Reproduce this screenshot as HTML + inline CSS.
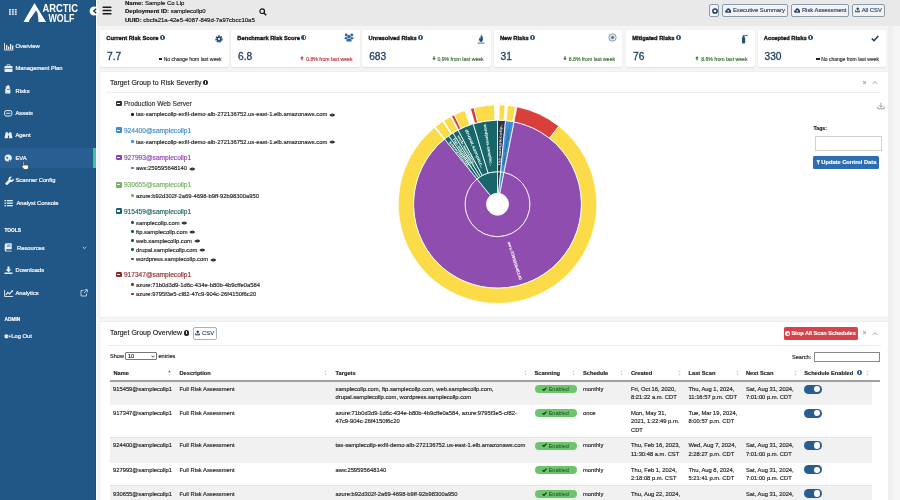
<!DOCTYPE html>
<html><head><meta charset="utf-8"><style>
*{box-sizing:border-box;margin:0;padding:0}
html,body{width:900px;height:500px;overflow:hidden;background:#f5f5f5;font-family:"Liberation Sans",sans-serif;color:#222}
#root{position:absolute;left:0;top:0;width:900px;height:500px;will-change:transform;-webkit-text-stroke-width:0.15px}
.a{position:absolute;white-space:nowrap}
#side{position:absolute;left:0;top:0;width:95.8px;border-right:1.3px solid #1b4b7a;height:500px;background:#215787}
#side .nv{position:absolute;color:#f4f7fb;font-size:5.8px;line-height:8px;height:8px;-webkit-text-stroke-width:0.22px}
#side .hd{position:absolute;left:4.5px;color:#fff;font-size:4.8px;font-weight:bold;line-height:6px}
#hdr{position:absolute;left:97.2px;top:0;width:803px;height:25.5px;background:#e9e9e9}
.card{position:absolute;top:29.5px;height:37px;width:128.5px;background:#fff;border-radius:2px;box-shadow:0 0.4px 1.2px rgba(0,0,0,.09)}
.card .t{position:absolute;left:6.3px;top:4px;font-size:5.75px;font-weight:bold;line-height:8px;color:#111;-webkit-text-stroke-width:0.3px}
.card .v{position:absolute;left:7px;top:20px;font-size:10.2px;line-height:13px;color:#1f4068;-webkit-text-stroke-width:0.3px}
.card .d{position:absolute;right:7px;top:26.3px;font-size:5px;line-height:6px;color:#333}
.info{display:inline-block;width:5px;height:5px;border-radius:50%;background:#2d5a88;vertical-align:-0.5px;margin-left:1.5px;position:relative}
.info:after{content:"";position:absolute;left:2.1px;top:2px;width:0.8px;height:2px;background:#fff}
.info:before{content:"";position:absolute;left:2.1px;top:0.9px;width:0.8px;height:0.7px;background:#fff}
.panel{position:absolute;left:100px;width:788px;background:#fff;box-shadow:0 0 0 0.6px #ebebeb}
.btn{position:absolute;background:#f1f3f6;border:0.8px solid #8c9bab;border-radius:2px;color:#1f3a5c;font-size:5.85px;line-height:11.5px;text-align:center}
.lg{position:absolute;font-size:6.6px;line-height:9px}
.sb{position:absolute;left:136px;font-size:5.85px;line-height:8px;color:#222}
.sb:before{content:"";position:absolute;left:-4.8px;top:2.5px;width:2.7px;height:2.7px;border-radius:50%;background:currentColor}
.th{position:absolute;top:368.6px;font-size:5.7px;font-weight:bold;line-height:8px;color:#222}
.td{position:absolute;font-size:5.8px;line-height:8.3px;color:#222;white-space:nowrap}
.badge{position:absolute;left:534.5px;width:42px;height:8px;border-radius:4px;background:#6cc56c;color:#1f3f1f;font-size:5.5px;-webkit-text-stroke-width:0;line-height:8px;text-align:center}
.tog{position:absolute;left:803.5px;width:18px;height:9px;border-radius:4.5px;background:#275d92}
.tog:after{content:"";position:absolute;right:1.2px;top:1.2px;width:6.6px;height:6.6px;border-radius:50%;background:#fff}
.srt{position:absolute;top:368.6px;font-size:5px;color:#bbb;line-height:8px}
</style></head><body><div id="root">
<div id="side">
<svg class="a" style="left:8.5px;top:9px" width="8" height="6" viewBox="0 0 8 6"><g fill="#e8eef5"><rect x="0" y="0" width="1.9" height="1.5"/><rect x="0" y="2.2" width="1.9" height="1.5"/><rect x="0" y="4.4" width="1.9" height="1.5"/><rect x="2.9" y="0" width="1.9" height="1.5"/><rect x="2.9" y="2.2" width="1.9" height="1.5"/><rect x="2.9" y="4.4" width="1.9" height="1.5"/><rect x="5.8" y="0" width="1.9" height="1.5"/><rect x="5.8" y="2.2" width="1.9" height="1.5"/><rect x="5.8" y="4.4" width="1.9" height="1.5"/></g></svg>
<svg class="a" style="left:22px;top:2px" width="60" height="22" viewBox="0 0 60 22">
<path d="M12.5 1 L24 20 L16.5 20 L16 14 L15.5 11 L14 8.5 L13 10 L12 11.5 L9.5 15 L7.5 17.5 L7 20 L1.5 20 Z" fill="#fff"/>
<text x="20.5" y="10.3" font-family="Liberation Sans" font-weight="bold" font-size="10" fill="#fff" textLength="35.5" lengthAdjust="spacingAndGlyphs">ARCTIC</text>
<text x="26.5" y="20" font-family="Liberation Sans" font-weight="bold" font-size="10" fill="#fff" textLength="26" lengthAdjust="spacingAndGlyphs">WOLF</text>
</svg>
<div class="a" style="left:0;top:148px;width:95px;height:20px;background:#285e92"></div>
<div class="a" style="left:93px;top:148px;width:2.5px;height:20px;background:#3cc4a0"></div>
<div class="nv" style="top:41.5px;left:15.5px">Overview</div>
<svg class="a" style="left:4px;top:41.5px" width="10" height="9" viewBox="0 0 10 9"><path d="M0.5 1v7h9" stroke="#e8eef5" stroke-width="0.9" fill="none"/><rect x="2" y="3" width="1.3" height="4.3" fill="#e8eef5"/><rect x="4" y="4.5" width="1.3" height="2.8" fill="#e8eef5"/><rect x="6" y="2" width="1.3" height="5.3" fill="#e8eef5"/><rect x="8" y="3.5" width="1.3" height="3.8" fill="#e8eef5"/></svg>
<div class="nv" style="top:64.0px;left:15.5px">Management Plan</div>
<svg class="a" style="left:4px;top:64.0px" width="10" height="9" viewBox="0 0 10 9"><rect x="0.5" y="2" width="8" height="6" rx="0.8" fill="#e8eef5"/><rect x="3" y="0.8" width="3" height="1.6" fill="none" stroke="#e8eef5" stroke-width="0.7"/><rect x="0.5" y="4.3" width="8" height="0.7" fill="#215787"/></svg>
<div class="nv" style="top:86.5px;left:15.5px">Risks</div>
<svg class="a" style="left:4px;top:85.3px" width="10" height="9" viewBox="0 0 10 9"><path d="M3.6 0.2h1.4v1h0.9v1.2l-0.5 0.6 1 1.2v4.3h-5.2v-4.3l1-1.2-0.5-0.6v-1.2h0.9z" fill="#e8eef5"/><rect x="3.1" y="4.2" width="2.4" height="0.8" fill="#215787"/></svg>
<div class="nv" style="top:108.8px;left:15.5px">Assets</div>
<svg class="a" style="left:4px;top:108.8px" width="10" height="9" viewBox="0 0 10 9"><rect x="0.6" y="1.6" width="7.2" height="5.4" rx="1.6" fill="none" stroke="#e8eef5" stroke-width="1"/><path d="M2.2 4.3h4" stroke="#e8eef5" stroke-width="1"/></svg>
<div class="nv" style="top:131.2px;left:15.5px">Agent</div>
<svg class="a" style="left:4px;top:131.2px" width="10" height="9" viewBox="0 0 10 9"><path d="M0.5 7.3l1.2-6h2.2v6zM5.1 7.3v-6h2.2l1.2 6z" fill="#e8eef5"/><rect x="3" y="2.5" width="3" height="2" fill="#e8eef5"/></svg>
<div class="nv" style="top:153.8px;left:15.5px">EVA</div>
<svg class="a" style="left:4px;top:153.8px" width="10" height="9" viewBox="0 0 10 9"><circle cx="4.2" cy="4" r="3.6" fill="#e8eef5"/><path d="M2 2.5q1.5 0.3 2.3 1.5q-0.5 1-1 1q-1-0.5-1.3-2.5z M5 5.5q1 0 1.8 1q-1 0.8-2.2 0.7z" fill="#285e92"/></svg>
<div class="nv" style="top:176.2px;left:15.5px">Scanner Config</div>
<svg class="a" style="left:4px;top:176.2px" width="10" height="9" viewBox="0 0 10 9"><path d="M1 7.5l3.5-3.5q-0.5-2 1-3t2.5-0.2l-1.6 1.6 0.3 1.3 1.3 0.3 1.6-1.6q0.5 1.3-0.3 2.5t-3 1l-3.5 3.5z" fill="#e8eef5"/></svg>
<div class="nv" style="top:198.7px;left:16.5px">Analyst Console</div>
<svg class="a" style="left:4px;top:198.7px" width="10" height="9" viewBox="0 0 10 9"><g fill="#e8eef5"><rect x="0.5" y="1" width="1.5" height="1.3"/><rect x="2.8" y="1" width="6" height="1.3"/><rect x="0.5" y="3.5" width="1.5" height="1.3"/><rect x="2.8" y="3.5" width="6" height="1.3"/><rect x="0.5" y="6" width="1.5" height="1.3"/><rect x="2.8" y="6" width="6" height="1.3"/></g></svg>
<div class="nv" style="top:243.5px;left:17px">Resources</div>
<svg class="a" style="left:4px;top:242.9px" width="10" height="9" viewBox="0 0 10 9"><path d="M2.3 0.3h5.4v6h-5.1q-0.7 0-0.7 0.7t0.7 0.7h5.1v0.8h-5.4q-1.6 0-1.6-1.5v-5.2q0-1.5 1.6-1.5z" fill="#e8eef5"/><path d="M3 2h3.5M3 3.3h3.5" stroke="#215787" stroke-width="0.6"/></svg>
<div class="nv" style="top:266.0px;left:15.5px">Downloads</div>
<svg class="a" style="left:4px;top:266.0px" width="10" height="9" viewBox="0 0 10 9"><path d="M3.5 0.5h2v3h1.8l-2.8 2.8-2.8-2.8h1.8z" fill="#e8eef5"/><rect x="0.5" y="6.5" width="8" height="1.5" fill="#e8eef5"/></svg>
<div class="nv" style="top:288.5px;left:15.5px">Analytics</div>
<svg class="a" style="left:4px;top:288.5px" width="10" height="9" viewBox="0 0 10 9"><path d="M0.6 1v6.5h8.5" stroke="#e8eef5" stroke-width="0.9" fill="none"/><path d="M1.8 6l2-2.6 1.8 1.5 2.9-3.2" stroke="#e8eef5" stroke-width="1.1" fill="none"/><path d="M7.2 1.3h1.8v1.8z" fill="#e8eef5"/></svg>
<div class="nv" style="top:332.3px;left:11.3px">Log Out</div>
<svg class="a" style="left:4px;top:331.8px" width="10" height="9" viewBox="0 0 10 9"><rect x="0.6" y="2.4" width="3.6" height="3.8" rx="0.8" fill="#e8eef5"/><path d="M3.5 4.3H5.6" stroke="#215787" stroke-width="0.7"/><path d="M4.6 4.3H6" stroke="#e8eef5" stroke-width="1"/><path d="M5.5 2.9L7.1 4.3 5.5 5.7Z" fill="#e8eef5"/></svg>
<div class="hd" style="top:228px">TOOLS</div><div class="hd" style="top:317.3px">ADMIN</div>
<svg class="a" style="left:82px;top:246px" width="5" height="4" viewBox="0 0 5 4"><path d="M0.8 1l1.7 1.6 1.7-1.6" stroke="#dfe7f0" stroke-width="0.8" fill="none"/></svg>
<svg class="a" style="left:79.5px;top:288.5px" width="8" height="8" viewBox="0 0 8 8"><path d="M3.5 1.5h-2.5v5.5h5.5v-2.5" stroke="#dfe7f0" stroke-width="0.8" fill="none"/><path d="M4 4l3.3-3.3M4.5 0.7h2.8v2.8" stroke="#dfe7f0" stroke-width="0.8" fill="none"/></svg>
<svg class="a" style="left:21px;top:160.5px" width="9" height="9" viewBox="0 0 9 9"><path d="M2 0.8q0.8-0.5 1.2 0.3v3q0.8-0.6 1.5 0q0.8-0.5 1.5 0.1q0.8-0.4 1.4 0.3v2.5q-0.5 1.5-2 1.5h-1.8q-1 0-1.8-1.2l-1.6-2.3q-0.2-0.8 0.7-0.8l0.9 0.8v-4.2z" fill="#fff" stroke="#222" stroke-width="0.6"/></svg>
</div>
<div id="hdr"></div>
<div class="a" style="left:95.8px;top:0;width:1.4px;height:500px;background:#fff"></div>
<svg class="a" style="left:88.2px;top:4.5px" width="12" height="12" viewBox="0 0 12 12"><circle cx="6.2" cy="6" r="4.6" fill="#fff"/><path d="M8.2 3.7L5.8 6 8.2 8.3" stroke="#1d2d3d" stroke-width="1.3" fill="none"/></svg>
<svg class="a" style="left:101.5px;top:6px" width="10" height="9" viewBox="0 0 10 9"><g fill="#1a1a1a"><rect x="0.5" y="0.5" width="9" height="1.5" rx="0.6"/><rect x="0.5" y="3.8" width="9" height="1.5" rx="0.6"/><rect x="0.5" y="7" width="9" height="1.5" rx="0.6"/></g></svg>
<div class="a" style="left:125px;top:-0.4px;font-size:6px;line-height:6px;color:#111"><b>Name:</b> Sample Co Llp</div>
<div class="a" style="left:125px;top:8.1px;font-size:6px;line-height:6px;color:#111"><b>Deployment ID:</b> samplecollp0</div>
<div class="a" style="left:125px;top:16.8px;font-size:6px;line-height:6px;color:#111"><b>UUID:</b> cbcfa21a-42e5-4087-849d-7a97cbcc10a5</div>
<svg class="a" style="left:258.5px;top:7.5px" width="8" height="8" viewBox="0 0 8 8"><circle cx="3.2" cy="3.2" r="2.3" stroke="#111" stroke-width="1.2" fill="none"/><path d="M4.9 4.9l2.3 2.3" stroke="#111" stroke-width="1.4"/></svg>
<div class="btn" style="left:708.5px;top:4px;width:10.5px;height:13px"><svg style="position:absolute;left:2.3px;top:3.3px" width="6" height="6" viewBox="0 0 6 6"><circle cx="3" cy="3" r="2.1" fill="none" stroke="#1f3a5c" stroke-width="1.5"/></svg></div>
<div class="btn" style="left:722px;top:4px;width:65.5px;height:13px"><svg style="display:inline-block;margin-right:1.8px;vertical-align:-0.8px" width="6.5" height="5" viewBox="0 0 6.5 5"><path d="M1.5 4.8Q0.1 4.8 0.1 3.5Q0.1 2.3 1.3 2.2Q1.6 0.3 3.4 0.3Q5 0.3 5.3 2Q6.4 2.2 6.4 3.4Q6.4 4.8 5 4.8Z" fill="#1f3a5c"/><path d="M3.25 4.3V2.5M2.3 3.2L3.25 2.1 4.2 3.2" stroke="#fff" stroke-width="0.7" fill="none"/></svg>Executive Summary</div>
<div class="btn" style="left:791px;top:4px;width:58px;height:13px"><svg style="display:inline-block;margin-right:1.8px;vertical-align:-0.8px" width="6.5" height="5" viewBox="0 0 6.5 5"><path d="M1.5 4.8Q0.1 4.8 0.1 3.5Q0.1 2.3 1.3 2.2Q1.6 0.3 3.4 0.3Q5 0.3 5.3 2Q6.4 2.2 6.4 3.4Q6.4 4.8 5 4.8Z" fill="#1f3a5c"/><path d="M3.25 4.3V2.5M2.3 3.2L3.25 2.1 4.2 3.2" stroke="#fff" stroke-width="0.7" fill="none"/></svg>Risk Assessment</div>
<div class="btn" style="left:852px;top:4px;width:32.5px;height:13px"><svg style="display:inline-block;margin-right:1.6px;vertical-align:-0.5px" width="5.5" height="5.5" viewBox="0 0 5.5 5.5"><path d="M2.75 0.2L4.6 2.3H3.4V3.6H2.1V2.3H0.9Z" fill="#1f3a5c"/><path d="M0.2 3.3V5.2H5.3V3.3H4.5V4.3H1V3.3Z" fill="#1f3a5c"/></svg>All CSV</div>
<div class="card" style="left:100px"><div class="t">Current Risk Score<span class="info"></span></div><div class="v">7.7</div><div class="d" style="color:#333;font-size:5px"><span style="display:inline-block;width:3.6px;height:1.2px;background:#222;margin-right:1.3px;vertical-align:1.2px"></span>No change from last week</div><svg class="a" style="right:6px;top:5px" width="8" height="8" viewBox="0 0 8 8"><circle cx="4" cy="4" r="2.4" fill="none" stroke="#23507f" stroke-width="2.6" stroke-dasharray="1.3 0.6"/><circle cx="4" cy="4" r="2.5" fill="#23507f"/><circle cx="4" cy="4" r="1" fill="#fff"/></svg></div>
<div class="card" style="left:231px"><div class="t">Benchmark Risk Score<span class="info"></span></div><div class="v">6.8</div><div class="d" style="color:#c0303a;font-size:5.15px"><svg style="display:inline-block;margin-right:1.8px;vertical-align:-0.2px" width="4" height="4.6" viewBox="0 0 4 4.6"><path d="M2 0.3L3.8 2.3H2.6V4.3H1.4V2.3H0.2Z" fill="#c0303a"/></svg>0.8% from last week</div><svg class="a" style="right:6px;top:3.5px" width="10" height="9" viewBox="0 0 10 9"><g fill="#2d6aa8"><circle cx="2.2" cy="2" r="1.4"/><circle cx="7.8" cy="2" r="1.4"/><circle cx="5" cy="3.5" r="1.7"/><path d="M0.3 6q0-2 2-2 1 0 1.5 0.6 -0.5 1-0.5 2z"/><path d="M9.7 6q0-2-2-2-1 0-1.5 0.6 0.5 1 0.5 2z"/><path d="M2.3 8.5q0-3 2.7-3t2.7 3z"/></g></svg></div>
<div class="card" style="left:362.2px"><div class="t">Unresolved Risks<span class="info"></span></div><div class="v">683</div><div class="d" style="color:#3d6b35;font-size:5.15px"><svg style="display:inline-block;margin-right:1.8px;vertical-align:-0.2px" width="4" height="4.6" viewBox="0 0 4 4.6"><path d="M2 4.3L3.8 2.3H2.6V0.3H1.4V2.3H0.2Z" fill="#3d6b35"/></svg>0.9% from last week</div><svg class="a" style="right:6px;top:4px" width="8" height="10" viewBox="0 0 8 10"><path d="M4 0.5q2.5 2.5 2 5t-2 2.5-2-2.5q0-1.5 1.2-2.5q-0.3 1.5 0.6 1.8q-0.5-2.2 0.2-4.3z" fill="#23507f"/><rect x="0.5" y="8.7" width="7" height="0.8" fill="#23507f"/></svg></div>
<div class="card" style="left:493.6px"><div class="t">New Risks<span class="info"></span></div><div class="v">31</div><div class="d" style="color:#3d6b35;font-size:5.15px"><svg style="display:inline-block;margin-right:1.8px;vertical-align:-0.2px" width="4" height="4.6" viewBox="0 0 4 4.6"><path d="M2 4.3L3.8 2.3H2.6V0.3H1.4V2.3H0.2Z" fill="#3d6b35"/></svg>8.8% from last week</div><svg class="a" style="right:5.5px;top:3.5px" width="9" height="9" viewBox="0 0 9 9"><circle cx="4.5" cy="4.5" r="3.7" fill="#d8e0ea" stroke="#7d8fa5" stroke-width="0.8"/><circle cx="4.5" cy="4.5" r="1.3" fill="#3d5a7c"/></svg></div>
<div class="card" style="left:626px"><div class="t">Mitigated Risks<span class="info"></span></div><div class="v">76</div><div class="d" style="color:#3d6b35;font-size:5.15px"><svg style="display:inline-block;margin-right:1.8px;vertical-align:-0.2px" width="4" height="4.6" viewBox="0 0 4 4.6"><path d="M2 0.3L3.8 2.3H2.6V4.3H1.4V2.3H0.2Z" fill="#3d6b35"/></svg>8.6% from last week</div><svg class="a" style="right:5.5px;top:4px" width="9" height="10" viewBox="0 0 9 10"><rect x="2" y="3" width="3.2" height="6.5" rx="1" fill="#23507f"/><rect x="2.7" y="1.2" width="1.8" height="2" fill="#23507f"/><path d="M4.5 1.5h2.5M7 0.8v1.6" stroke="#23507f" stroke-width="0.8"/></svg></div>
<div class="card" style="left:757.5px"><div class="t">Accepted Risks<span class="info"></span></div><div class="v">330</div><div class="d" style="color:#333;font-size:5px"><span style="display:inline-block;width:3.6px;height:1.2px;background:#222;margin-right:1.3px;vertical-align:1.2px"></span>No change from last week</div><svg class="a" style="right:7px;top:5px" width="8" height="7" viewBox="0 0 8 7"><path d="M0.8 3.5l2.2 2.2 4.3-4.6" stroke="#1e3550" stroke-width="1.5" fill="none"/></svg></div>
<div class="panel" style="top:71.5px;height:245.5px"></div>
<div class="a" style="left:110px;top:77.5px;font-size:7px;line-height:10px;color:#222">Target Group to Risk Severity<span class="info" style="background:#222;width:5.2px;height:5.2px;margin-left:1.8px"></span></div>
<div class="a" style="left:106px;top:91.5px;width:774px;height:0.8px;background:#ececec"></div>
<div class="a" style="left:862.5px;top:78.5px;font-size:6.8px;line-height:8px;color:#999">&#215;</div>
<svg class="a" style="left:871.5px;top:80px" width="6" height="5" viewBox="0 0 6 5"><path d="M0.8 3.8l2.2-2.2 2.2 2.2" stroke="#999" stroke-width="1" fill="none"/></svg>
<svg class="a" style="left:876.5px;top:102px" width="8" height="8" viewBox="0 0 8 8"><path d="M4 0.8v4.3M2.2 3.5l1.8 1.8 1.8-1.8M0.8 4.5v2.3h6.4v-2.3" stroke="#888" stroke-width="0.8" fill="none"/></svg>
<div class="a" style="left:813.5px;top:125px;font-size:5.2px;font-weight:bold;line-height:7px;color:#222">Tags:</div>
<div class="a" style="left:815px;top:135.5px;width:66.5px;height:15.5px;border:0.8px solid #d2d2d2;background:#fff"></div>
<div class="a" style="left:813px;top:156px;width:66px;height:13px;background:#2f6db3;border-radius:1.5px;color:#fff;font-size:5.7px;font-weight:bold;line-height:13px;text-align:center"><svg style="display:inline-block;margin-right:1.2px;vertical-align:-0.6px" width="4.5" height="5" viewBox="0 0 4.5 5"><path d="M0.2 0.3H4.3L2.8 2.2V4.7L1.7 4V2.2Z" fill="#fff"/></svg>Update Control Data</div>
<div class="lg" style="left:116px;top:98.9px;color:#333"><span style="display:inline-block;width:5.6px;height:5.6px;border-radius:1.2px;background:#333;margin-right:2.3px;vertical-align:-0.3px;position:relative"><i style="position:absolute;left:1.1px;top:2.2px;width:3.4px;height:1.2px;background:#fff"></i></span>Production Web Server</div>
<div class="sb" style="top:110.4px;color:#111"><span style="color:#222">tas-samplecollp-exfil-demo-alb-272136752.us-east-1.elb.amazonaws.com</span><svg style="display:inline-block;margin-left:1.8px;vertical-align:-0.6px" width="6.5" height="4" viewBox="0 0 6.5 4"><path d="M0.3 2Q3.25-1 6.2 2Q3.25 5 0.3 2Z" fill="#222"/><circle cx="3.25" cy="2" r="0.8" fill="#666"/></svg></div>
<div class="lg" style="left:116px;top:125.7px;color:#3b8ccc"><span style="display:inline-block;width:5.6px;height:5.6px;border-radius:1.2px;background:#3b8ccc;margin-right:2.3px;vertical-align:-0.3px;position:relative"><i style="position:absolute;left:1.1px;top:2.2px;width:3.4px;height:1.2px;background:#fff"></i></span>924400@samplecollp1</div>
<div class="sb" style="top:137.7px;color:#3b8ccc"><span style="color:#222">tas-samplecollp-exfil-demo-alb-272136752.us-east-1.elb.amazonaws.com</span><svg style="display:inline-block;margin-left:1.8px;vertical-align:-0.6px" width="6.5" height="4" viewBox="0 0 6.5 4"><path d="M0.3 2Q3.25-1 6.2 2Q3.25 5 0.3 2Z" fill="#222"/><circle cx="3.25" cy="2" r="0.8" fill="#666"/></svg></div>
<div class="lg" style="left:116px;top:152.8px;color:#8e44ad"><span style="display:inline-block;width:5.6px;height:5.6px;border-radius:1.2px;background:#8e44ad;margin-right:2.3px;vertical-align:-0.3px;position:relative"><i style="position:absolute;left:1.1px;top:2.2px;width:3.4px;height:1.2px;background:#fff"></i></span>927993@samplecollp1</div>
<div class="sb" style="top:164.3px;color:#8e44ad"><span style="color:#222">aws:259595648140</span><svg style="display:inline-block;margin-left:1.8px;vertical-align:-0.6px" width="6.5" height="4" viewBox="0 0 6.5 4"><path d="M0.3 2Q3.25-1 6.2 2Q3.25 5 0.3 2Z" fill="#222"/><circle cx="3.25" cy="2" r="0.8" fill="#666"/></svg></div>
<div class="lg" style="left:116px;top:180.4px;color:#76b062"><span style="display:inline-block;width:5.6px;height:5.6px;border-radius:1.2px;background:#76b062;margin-right:2.3px;vertical-align:-0.3px;position:relative"><i style="position:absolute;left:1.1px;top:2.2px;width:3.4px;height:1.2px;background:#fff"></i></span>930655@samplecollp1</div>
<div class="sb" style="top:191.7px;color:#76b062"><span style="color:#222">azure:b92d302f-2a69-4698-b9ff-92b98300a950</span></div>
<div class="lg" style="left:116px;top:206.5px;color:#1a6468"><span style="display:inline-block;width:5.6px;height:5.6px;border-radius:1.2px;background:#1a6468;margin-right:2.3px;vertical-align:-0.3px;position:relative"><i style="position:absolute;left:1.1px;top:2.2px;width:3.4px;height:1.2px;background:#fff"></i></span>915459@samplecollp1</div>
<div class="sb" style="top:218.7px;color:#1a5a5e"><span style="color:#222">samplecollp.com</span><svg style="display:inline-block;margin-left:1.8px;vertical-align:-0.6px" width="6.5" height="4" viewBox="0 0 6.5 4"><path d="M0.3 2Q3.25-1 6.2 2Q3.25 5 0.3 2Z" fill="#222"/><circle cx="3.25" cy="2" r="0.8" fill="#666"/></svg></div>
<div class="sb" style="top:227.9px;color:#1a5a5e"><span style="color:#222">ftp.samplecollp.com</span><svg style="display:inline-block;margin-left:1.8px;vertical-align:-0.6px" width="6.5" height="4" viewBox="0 0 6.5 4"><path d="M0.3 2Q3.25-1 6.2 2Q3.25 5 0.3 2Z" fill="#222"/><circle cx="3.25" cy="2" r="0.8" fill="#666"/></svg></div>
<div class="sb" style="top:236.8px;color:#1a5a5e"><span style="color:#222">web.samplecollp.com</span><svg style="display:inline-block;margin-left:1.8px;vertical-align:-0.6px" width="6.5" height="4" viewBox="0 0 6.5 4"><path d="M0.3 2Q3.25-1 6.2 2Q3.25 5 0.3 2Z" fill="#222"/><circle cx="3.25" cy="2" r="0.8" fill="#666"/></svg></div>
<div class="sb" style="top:245.9px;color:#1a5a5e"><span style="color:#222">drupal.samplecollp.com</span><svg style="display:inline-block;margin-left:1.8px;vertical-align:-0.6px" width="6.5" height="4" viewBox="0 0 6.5 4"><path d="M0.3 2Q3.25-1 6.2 2Q3.25 5 0.3 2Z" fill="#222"/><circle cx="3.25" cy="2" r="0.8" fill="#666"/></svg></div>
<div class="sb" style="top:255.0px;color:#1a5a5e"><span style="color:#222">wordpress.samplecollp.com</span><svg style="display:inline-block;margin-left:1.8px;vertical-align:-0.6px" width="6.5" height="4" viewBox="0 0 6.5 4"><path d="M0.3 2Q3.25-1 6.2 2Q3.25 5 0.3 2Z" fill="#222"/><circle cx="3.25" cy="2" r="0.8" fill="#666"/></svg></div>
<div class="lg" style="left:116px;top:269.9px;color:#8b2b2b"><span style="display:inline-block;width:5.6px;height:5.6px;border-radius:1.2px;background:#8b2b2b;margin-right:2.3px;vertical-align:-0.3px;position:relative"><i style="position:absolute;left:1.1px;top:2.2px;width:3.4px;height:1.2px;background:#fff"></i></span>917347@samplecollp1</div>
<div class="sb" style="top:280.8px;color:#8b2b2b"><span style="color:#222">azure:71b0d3d9-1d6c-434e-b80b-4b9cffe0a584</span></div>
<div class="sb" style="top:290.0px;color:#8b2b2b"><span style="color:#222">azure:9795f3e5-cf82-47c9-904c-26f4150f6c20</span></div>
<svg class="a" style="left:390px;top:95px" width="220" height="220" viewBox="0 0 220 220"><path d="M113.87 77.33A32.5 32.5 0 1 1 87.00 83.98L100.56 100.66A11 11 0 1 0 109.66 98.41Z" fill="#8f4db0" stroke="#fff" stroke-width="0.8"/><path d="M87.00 83.98A32.5 32.5 0 0 1 107.50 76.70L107.50 98.20A11 11 0 0 0 100.56 100.66Z" fill="#17676a" stroke="#fff" stroke-width="0.8"/><path d="M107.50 76.70A32.5 32.5 0 0 1 110.61 76.85L108.55 98.25A11 11 0 0 0 107.50 98.20Z" fill="#2b3445" stroke="#fff" stroke-width="0.8"/><path d="M110.61 76.85A32.5 32.5 0 0 1 113.87 77.33L109.66 98.41A11 11 0 0 0 108.55 98.25Z" fill="#3d8fd6" stroke="#fff" stroke-width="0.8"/><path d="M123.96 26.83A84 84 0 1 1 54.52 44.01L87.00 83.98A32.5 32.5 0 1 0 113.87 77.33Z" fill="#8f4db0" stroke="#fff" stroke-width="0.8"/><path d="M54.52 44.01A84 84 0 0 1 58.72 40.81L88.63 82.74A32.5 32.5 0 0 0 87.00 83.98Z" fill="#17676a" stroke="#fff" stroke-width="0.8"/><path d="M58.72 40.81A84 84 0 0 1 62.99 37.96L90.28 81.64A32.5 32.5 0 0 0 88.63 82.74Z" fill="#17676a" stroke="#fff" stroke-width="0.8"/><path d="M62.99 37.96A84 84 0 0 1 68.06 35.03L92.24 80.50A32.5 32.5 0 0 0 90.28 81.64Z" fill="#17676a" stroke="#fff" stroke-width="0.8"/><path d="M68.06 35.03A84 84 0 0 1 83.22 28.79L98.11 78.09A32.5 32.5 0 0 0 92.24 80.50Z" fill="#17676a" stroke="#fff" stroke-width="0.8"/><path d="M83.22 28.79A84 84 0 0 1 107.50 25.20L107.50 76.70A32.5 32.5 0 0 0 98.11 78.09Z" fill="#17676a" stroke="#fff" stroke-width="0.8"/><path d="M107.50 25.20A84 84 0 0 1 115.55 25.59L110.61 76.85A32.5 32.5 0 0 0 107.50 76.70Z" fill="#2b3445" stroke="#fff" stroke-width="0.8"/><path d="M115.55 25.59A84 84 0 0 1 123.96 26.83L113.87 77.33A32.5 32.5 0 0 0 110.61 76.85Z" fill="#3d8fd6" stroke="#fff" stroke-width="0.8"/><path d="M126.96 11.82A99.3 99.3 0 0 1 168.91 31.16L159.45 43.19A84 84 0 0 0 123.96 26.83Z" fill="#d9403c" stroke="#fff" stroke-width="0.8"/><path d="M168.91 31.16A99.3 99.3 0 1 1 44.34 32.58L54.07 44.38A84 84 0 1 0 159.45 43.19Z" fill="#fbdc48" stroke="#fff" stroke-width="0.8"/><path d="M45.28 31.81A99.3 99.3 0 0 1 52.69 26.40L61.14 39.15A84 84 0 0 0 54.87 43.74Z" fill="#fbdc48" stroke="#fff" stroke-width="0.8"/><path d="M53.71 25.73A99.3 99.3 0 0 1 60.42 21.77L67.68 35.24A84 84 0 0 0 62.00 38.59Z" fill="#fbdc48" stroke="#fff" stroke-width="0.8"/><path d="M61.49 21.20A99.3 99.3 0 0 1 64.28 19.80L70.94 33.57A84 84 0 0 0 68.58 34.76Z" fill="#d9403c" stroke="#fff" stroke-width="0.8"/><path d="M64.28 19.80A99.3 99.3 0 0 1 74.68 15.48L79.74 29.92A84 84 0 0 0 70.94 33.57Z" fill="#fbdc48" stroke="#fff" stroke-width="0.8"/><path d="M80.46 13.65A99.3 99.3 0 0 1 84.15 12.68L87.75 27.56A84 84 0 0 0 84.63 28.37Z" fill="#d9403c" stroke="#fff" stroke-width="0.8"/><path d="M84.15 12.68A99.3 99.3 0 0 1 104.38 9.95L104.86 25.24A84 84 0 0 0 87.75 27.56Z" fill="#fbdc48" stroke="#fff" stroke-width="0.8"/><path d="M109.23 9.92A99.3 99.3 0 0 1 115.12 10.19L113.94 25.45A84 84 0 0 0 108.97 25.21Z" fill="#fbdc48" stroke="#fff" stroke-width="0.8"/><path d="M117.71 10.43A99.3 99.3 0 0 1 125.43 11.53L122.66 26.58A84 84 0 0 0 116.13 25.64Z" fill="#fbdc48" stroke="#fff" stroke-width="0.8"/><text x="124.75" y="165.62" transform="rotate(73.0 124.75 165.62)" font-family="Liberation Sans" font-weight="bold" font-size="4.3" fill="#fff" text-anchor="middle" dominant-baseline="central" textLength="40" lengthAdjust="spacingAndGlyphs">aws:259595648140</text><text x="98.32" y="49.91" transform="rotate(81.2 98.32 49.91)" font-family="Liberation Sans" font-weight="bold" font-size="4.2" fill="#fff" text-anchor="middle" dominant-baseline="central" textLength="42" lengthAdjust="spacingAndGlyphs">wordpress.samplec..</text><text x="84.54" y="53.77" transform="rotate(67.5 84.54 53.77)" font-family="Liberation Sans" font-weight="bold" font-size="4.2" fill="#fff" text-anchor="middle" dominant-baseline="central" textLength="42" lengthAdjust="spacingAndGlyphs">drupal.samplec..</text><text x="76.50" y="55.51" transform="rotate(60.0 76.50 55.51)" font-family="Liberation Sans" font-weight="bold" font-size="3.4" fill="#fff" text-anchor="middle" dominant-baseline="central" textLength="34" lengthAdjust="spacingAndGlyphs">web.samplec..</text><text x="73.01" y="57.68" transform="rotate(56.2 73.01 57.68)" font-family="Liberation Sans" font-weight="bold" font-size="3.4" fill="#fff" text-anchor="middle" dominant-baseline="central" textLength="34" lengthAdjust="spacingAndGlyphs">ftp.samplec..</text><text x="69.93" y="59.88" transform="rotate(52.7 69.93 59.88)" font-family="Liberation Sans" font-weight="bold" font-size="3.4" fill="#fff" text-anchor="middle" dominant-baseline="central" textLength="34" lengthAdjust="spacingAndGlyphs">samplecol..</text><text x="110.33" y="49.27" transform="rotate(-87.3 110.33 49.27)" font-family="Liberation Sans" font-weight="bold" font-size="3.6" fill="#d8dde5" text-anchor="middle" dominant-baseline="central" textLength="42" lengthAdjust="spacingAndGlyphs">tas-samplecollp..</text><text x="116.26" y="49.84" transform="rotate(-81.6 116.26 49.84)" font-family="Liberation Sans" font-weight="bold" font-size="3.2" fill="#2a5a8a" text-anchor="middle" dominant-baseline="central" textLength="40" lengthAdjust="spacingAndGlyphs">tas-sample..</text></svg>
<div class="panel" style="top:321.5px;height:180px"></div>
<div class="a" style="left:110px;top:328px;font-size:7px;line-height:10px;color:#222">Target Group Overview<span class="info" style="background:#222;width:5.2px;height:5.2px;margin-left:1.8px"></span></div>
<div class="btn" style="left:192.5px;top:327.2px;width:24px;height:13px;background:#fff;border-color:#a9b3bf"><svg style="display:inline-block;margin-right:1.6px;vertical-align:-0.5px" width="5.5" height="5.5" viewBox="0 0 5.5 5.5"><path d="M2.75 0.2L4.6 2.3H3.4V3.6H2.1V2.3H0.9Z" fill="#1f3a5c"/><path d="M0.2 3.3V5.2H5.3V3.3H4.5V4.3H1V3.3Z" fill="#1f3a5c"/></svg>CSV</div>
<div class="a" style="left:783.5px;top:327.3px;width:74px;height:12.8px;background:#d8434b;border-radius:1.5px;color:#fff;font-size:5.5px;font-weight:bold;line-height:12.8px;text-align:center"><span style="display:inline-block;width:4.6px;height:4.6px;border-radius:50%;background:#fff;margin-right:1.6px;vertical-align:-0.6px;position:relative"><i style="position:absolute;left:1.3px;top:1.3px;width:2px;height:2px;border-radius:50%;background:#d8434b"></i></span>Stop All Scan Schedules</div>
<div class="a" style="left:862.5px;top:329px;font-size:6.8px;line-height:8px;color:#999">&#215;</div>
<svg class="a" style="left:871.5px;top:330.5px" width="6" height="5" viewBox="0 0 6 5"><path d="M0.8 3.8l2.2-2.2 2.2 2.2" stroke="#999" stroke-width="1" fill="none"/></svg>
<div class="a" style="left:106.5px;top:345.2px;width:774px;height:0.8px;background:#ececec"></div>
<div class="a" style="left:110px;top:352px;font-size:5.6px;line-height:8px;color:#222">Show</div>
<div class="a" style="left:125px;top:352px;width:32px;height:8px;border:0.7px solid #777;border-radius:1px;background:#fff;font-size:5.6px;line-height:6.8px;padding-left:2px;color:#222">10<svg style="position:absolute;right:1.5px;top:2.2px" width="4" height="3" viewBox="0 0 4 3"><path d="M0.5 0.7l1.5 1.5 1.5-1.5" stroke="#222" stroke-width="0.8" fill="none"/></svg></div>
<div class="a" style="left:158.5px;top:352px;font-size:5.6px;line-height:8px;color:#222">entries</div>
<div class="a" style="left:792px;top:353px;font-size:5.6px;line-height:8px;color:#222">Search:</div>
<div class="a" style="left:814px;top:351.8px;width:65.5px;height:10.5px;border:0.8px solid #888;background:#fff"></div>
<div class="th" style="left:113.5px">Name</div>
<div class="th" style="left:179.5px">Description</div>
<div class="th" style="left:335.5px">Targets</div>
<div class="th" style="left:534.5px">Scanning</div>
<div class="th" style="left:583px">Schedule</div>
<div class="th" style="left:631px">Created</div>
<div class="th" style="left:688.5px">Last Scan</div>
<div class="th" style="left:746px">Next Scan</div>
<div class="th" style="left:804.2px">Schedule Enabled</div>
<span class="info" style="position:absolute;left:855px;top:370.3px;background:#2d5a88"></span>
<svg class="a" style="left:324.0px;top:370px" width="3" height="6" viewBox="0 0 3 6"><path d="M1.5 0.3L2.7 2.2H0.3Z M1.5 5.7L2.7 3.8H0.3Z" fill="#cfcfcf"/></svg>
<svg class="a" style="left:523.5px;top:370px" width="3" height="6" viewBox="0 0 3 6"><path d="M1.5 0.3L2.7 2.2H0.3Z M1.5 5.7L2.7 3.8H0.3Z" fill="#cfcfcf"/></svg>
<svg class="a" style="left:572.1px;top:370px" width="3" height="6" viewBox="0 0 3 6"><path d="M1.5 0.3L2.7 2.2H0.3Z M1.5 5.7L2.7 3.8H0.3Z" fill="#cfcfcf"/></svg>
<svg class="a" style="left:619.5px;top:370px" width="3" height="6" viewBox="0 0 3 6"><path d="M1.5 0.3L2.7 2.2H0.3Z M1.5 5.7L2.7 3.8H0.3Z" fill="#cfcfcf"/></svg>
<svg class="a" style="left:677.5px;top:370px" width="3" height="6" viewBox="0 0 3 6"><path d="M1.5 0.3L2.7 2.2H0.3Z M1.5 5.7L2.7 3.8H0.3Z" fill="#cfcfcf"/></svg>
<svg class="a" style="left:735.5px;top:370px" width="3" height="6" viewBox="0 0 3 6"><path d="M1.5 0.3L2.7 2.2H0.3Z M1.5 5.7L2.7 3.8H0.3Z" fill="#cfcfcf"/></svg>
<svg class="a" style="left:793.5px;top:370px" width="3" height="6" viewBox="0 0 3 6"><path d="M1.5 0.3L2.7 2.2H0.3Z M1.5 5.7L2.7 3.8H0.3Z" fill="#cfcfcf"/></svg>
<svg class="a" style="left:865.5px;top:370px" width="3" height="6" viewBox="0 0 3 6"><path d="M1.5 0.3L2.7 2.2H0.3Z M1.5 5.7L2.7 3.8H0.3Z" fill="#cfcfcf"/></svg>
<svg class="a" style="left:168.2px;top:370px" width="3" height="6" viewBox="0 0 3 6"><path d="M1.5 0.3L2.7 2.2H0.3Z" fill="#555"/><path d="M1.5 5.7L2.7 3.8H0.3Z" fill="#e4e4e4"/></svg>
<div class="a" style="left:110px;top:379.8px;width:770px;height:1.8px;background:#a0a0a0"></div>
<div class="a" style="left:110px;top:381.6px;width:762px;height:23.899999999999977px;background:#f1f1f1"></div>
<div class="a" style="left:110px;top:437.2px;width:762px;height:0.6px;background:#e4e4e4"></div>
<div class="a" style="left:110px;top:437.8px;width:762px;height:24.80000000000001px;background:#f1f1f1"></div>
<div class="a" style="left:110px;top:485.0px;width:762px;height:0.6px;background:#e4e4e4"></div>
<div class="a" style="left:110px;top:485.6px;width:762px;height:24.399999999999977px;background:#f1f1f1"></div>
<div class="td" style="left:113px;top:385.1px">915459@samplecollp1</div>
<div class="td" style="left:179.5px;top:385.1px">Full Risk Assessment</div>
<div class="td" style="left:335.5px;top:385.1px">samplecollp.com, ftp.samplecollp.com, web.samplecollp.com,<br>drupal.samplecollp.com, wordpress.samplecollp.com</div>
<div class="badge" style="top:385.4px"><svg style="display:inline-block;margin-right:1.6px;vertical-align:0.4px" width="5" height="4" viewBox="0 0 5 4"><path d="M0.5 2.1L1.9 3.4 4.5 0.6" stroke="#16331a" stroke-width="1.2" fill="none"/></svg>Enabled</div>
<div class="td" style="left:583px;top:385.1px">monthly</div>
<div class="td" style="left:631px;top:385.1px">Fri, Oct 16, 2020,<br>8:21:22 a.m. CDT</div>
<div class="td" style="left:688.5px;top:385.1px">Thu, Aug 1, 2024,<br>11:16:57 p.m. CDT</div>
<div class="td" style="left:746px;top:385.1px">Sat, Aug 31, 2024,<br>7:01:00 p.m. CDT</div>
<div class="tog" style="top:384.7px"></div>
<div class="td" style="left:113px;top:409.1px">917347@samplecollp1</div>
<div class="td" style="left:179.5px;top:409.1px">Full Risk Assessment</div>
<div class="td" style="left:335.5px;top:409.1px">azure:71b0d3d9-1d6c-434e-b80b-4b9cffe0a584, azure:9795f3e5-cf82-<br>47c9-904c-26f4150f6c20</div>
<div class="badge" style="top:409.4px"><svg style="display:inline-block;margin-right:1.6px;vertical-align:0.4px" width="5" height="4" viewBox="0 0 5 4"><path d="M0.5 2.1L1.9 3.4 4.5 0.6" stroke="#16331a" stroke-width="1.2" fill="none"/></svg>Enabled</div>
<div class="td" style="left:583px;top:409.1px">once</div>
<div class="td" style="left:631px;top:409.1px">Mon, May 31,<br>2021, 1:22:49 p.m.<br>CDT</div>
<div class="td" style="left:688.5px;top:409.1px">Tue, Mar 19, 2024,<br>8:00:57 p.m. CDT</div>
<div class="tog" style="top:408.7px"></div>
<div class="td" style="left:113px;top:441.4px">924400@samplecollp1</div>
<div class="td" style="left:179.5px;top:441.4px">Full Risk Assessment</div>
<div class="td" style="left:335.5px;top:441.4px">tas-samplecollp-exfil-demo-alb-272136752.us-east-1.elb.amazonaws.com</div>
<div class="badge" style="top:441.7px"><svg style="display:inline-block;margin-right:1.6px;vertical-align:0.4px" width="5" height="4" viewBox="0 0 5 4"><path d="M0.5 2.1L1.9 3.4 4.5 0.6" stroke="#16331a" stroke-width="1.2" fill="none"/></svg>Enabled</div>
<div class="td" style="left:583px;top:441.4px">monthly</div>
<div class="td" style="left:631px;top:441.4px">Thu, Feb 16, 2023,<br>11:30:48 a.m. CST</div>
<div class="td" style="left:688.5px;top:441.4px">Wed, Aug 7, 2024,<br>2:28:27 p.m. CDT</div>
<div class="td" style="left:746px;top:441.4px">Sat, Aug 31, 2024,<br>7:01:00 p.m. CDT</div>
<div class="tog" style="top:441.0px"></div>
<div class="td" style="left:113px;top:465.8px">927993@samplecollp1</div>
<div class="td" style="left:179.5px;top:465.8px">Full Risk Assessment</div>
<div class="td" style="left:335.5px;top:465.8px">aws:259595648140</div>
<div class="badge" style="top:466.1px"><svg style="display:inline-block;margin-right:1.6px;vertical-align:0.4px" width="5" height="4" viewBox="0 0 5 4"><path d="M0.5 2.1L1.9 3.4 4.5 0.6" stroke="#16331a" stroke-width="1.2" fill="none"/></svg>Enabled</div>
<div class="td" style="left:583px;top:465.8px">monthly</div>
<div class="td" style="left:631px;top:465.8px">Thu, Feb 1, 2024,<br>2:18:08 p.m. CST</div>
<div class="td" style="left:688.5px;top:465.8px">Thu, Aug 8, 2024,<br>5:21:41 p.m. CDT</div>
<div class="td" style="left:746px;top:465.8px">Sat, Aug 31, 2024,<br>7:01:00 p.m. CDT</div>
<div class="tog" style="top:465.4px"></div>
<div class="td" style="left:113px;top:489.6px">930655@samplecollp1</div>
<div class="td" style="left:179.5px;top:489.6px">Full Risk Assessment</div>
<div class="td" style="left:335.5px;top:489.6px">azure:b92d302f-2a69-4698-b9ff-92b98300a950</div>
<div class="badge" style="top:489.9px"><svg style="display:inline-block;margin-right:1.6px;vertical-align:0.4px" width="5" height="4" viewBox="0 0 5 4"><path d="M0.5 2.1L1.9 3.4 4.5 0.6" stroke="#16331a" stroke-width="1.2" fill="none"/></svg>Enabled</div>
<div class="td" style="left:583px;top:489.6px">monthly</div>
<div class="td" style="left:631px;top:489.6px">Thu, Aug 22, 2024,</div>
<div class="td" style="left:746px;top:489.6px">Sat, Aug 31, 2024,</div>
<div class="tog" style="top:489.2px"></div>
<div class="a" style="left:888px;top:25.5px;width:4.5px;height:475px;background:#efefef"></div>
<div class="a" style="left:892.5px;top:25.5px;width:7.5px;height:475px;background:#f5f5f5"></div>
</div></body></html>
